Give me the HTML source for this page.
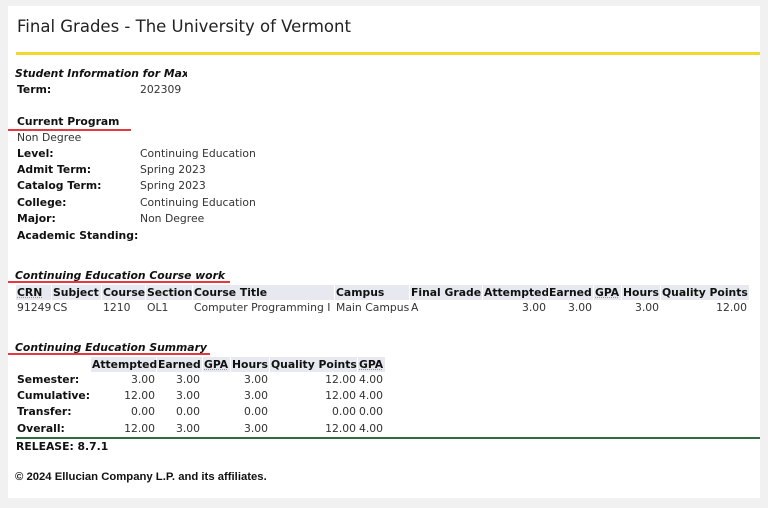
<!DOCTYPE html>
<html><head><meta charset="utf-8"><style>
body{margin:0;width:768px;height:508px;background:#f1f1f1;position:relative;overflow:hidden;font-family:"DejaVu Sans",Verdana,sans-serif;font-size:10.8px;color:#333}
#p{position:absolute;left:8px;top:6px;width:752px;height:492px;background:#fff}
.a{position:absolute;line-height:14px;white-space:nowrap}
.b{font-weight:bold;color:#111}
.i{font-style:italic;font-weight:bold;color:#111}
.h{position:absolute;background:#e8e8f0;height:15px;line-height:15px;font-weight:bold;color:#111;white-space:nowrap;padding-left:1px}
.r{position:absolute;height:2px;background:#e8383d}
.u{text-decoration:underline dotted #999}
.rt{text-align:right}
</style></head><body>
<div id="p"></div>
<div class="a" style="left:17px;top:17px;font-size:16.5px;line-height:20px;color:#222">Final Grades - The University of Vermont</div>
<div style="position:absolute;left:16px;top:52px;width:744px;height:3px;background:#f0d92c"></div>

<div class="a i" style="left:15px;top:67px;width:172px;overflow:hidden">Student Information for Max</div>
<div class="a b" style="left:17px;top:83px">Term:</div><div class="a" style="left:140px;top:83px">202309</div>
<div class="a b" style="left:17px;top:115px">Current Program</div>
<div class="r" style="left:8px;top:129px;width:123px"></div>
<div class="a" style="left:17px;top:131px">Non Degree</div>
<div class="a b" style="left:17px;top:147px">Level:</div><div class="a" style="left:140px;top:147px">Continuing Education</div>
<div class="a b" style="left:17px;top:163px">Admit Term:</div><div class="a" style="left:140px;top:163px">Spring 2023</div>
<div class="a b" style="left:17px;top:179px">Catalog Term:</div><div class="a" style="left:140px;top:179px">Spring 2023</div>
<div class="a b" style="left:17px;top:196px">College:</div><div class="a" style="left:140px;top:196px">Continuing Education</div>
<div class="a b" style="left:17px;top:212px">Major:</div><div class="a" style="left:140px;top:212px">Non Degree</div>
<div class="a b" style="left:17px;top:229px">Academic Standing:</div>

<div class="a i" style="left:15px;top:269px">Continuing Education Course work</div>
<div class="r" style="left:8px;top:281px;width:222px"></div>
<div class="h" style="left:16px;top:285px;width:34px"><span class="u">CRN</span></div>
<div class="h" style="left:52px;top:285px;width:48px">Subject</div>
<div class="h" style="left:102px;top:285px;width:42px">Course</div>
<div class="h" style="left:146px;top:285px;width:45px">Section</div>
<div class="h" style="left:193px;top:285px;width:140px">Course Title</div>
<div class="h" style="left:335px;top:285px;width:73px">Campus</div>
<div class="h" style="left:410px;top:285px;width:71px">Final Grade</div>
<div class="h" style="left:483px;top:285px;width:63px">Attempted</div>
<div class="h" style="left:548px;top:285px;width:44px">Earned</div>
<div class="h" style="left:594px;top:285px;width:26px"><span class="u">GPA</span></div>
<div class="h" style="left:622px;top:285px;width:37px">Hours</div>
<div class="h" style="left:661px;top:285px;width:87px">Quality Points</div>
<div class="a" style="left:17px;top:301px">91249</div>
<div class="a" style="left:53px;top:301px">CS</div>
<div class="a" style="left:103px;top:301px">1210</div>
<div class="a" style="left:147px;top:301px">OL1</div>
<div class="a" style="left:194px;top:301px">Computer Programming I</div>
<div class="a" style="left:336px;top:301px">Main Campus</div>
<div class="a" style="left:411px;top:301px">A</div>
<div class="a rt" style="left:483px;top:301px;width:63px">3.00</div>
<div class="a" style="left:568px;top:301px">3.00</div>
<div class="a rt" style="left:622px;top:301px;width:37px">3.00</div>
<div class="a rt" style="left:661px;top:301px;width:86px">12.00</div>

<div class="a i" style="left:15px;top:341px">Continuing Education Summary</div>
<div class="r" style="left:8px;top:353px;width:202px"></div>
<div class="h" style="left:91px;top:357px;width:64px">Attempted</div>
<div class="h" style="left:157px;top:357px;width:44px">Earned</div>
<div class="h" style="left:203px;top:357px;width:26px"><span class="u">GPA</span></div>
<div class="h" style="left:231px;top:357px;width:37px">Hours</div>
<div class="h" style="left:270px;top:357px;width:86px">Quality Points</div>
<div class="h" style="left:358px;top:357px;width:26px"><span class="u">GPA</span></div>

<div class="a b" style="left:17px;top:373px">Semester:</div>
<div class="a rt" style="left:91px;top:373px;width:64px">3.00</div><div class="a" style="left:176px;top:373px">3.00</div><div class="a rt" style="left:231px;top:373px;width:37px">3.00</div><div class="a rt" style="left:270px;top:373px;width:86px">12.00</div><div class="a" style="left:359px;top:373px">4.00</div>

<div class="a b" style="left:17px;top:389px">Cumulative:</div>
<div class="a rt" style="left:91px;top:389px;width:64px">12.00</div><div class="a" style="left:176px;top:389px">3.00</div><div class="a rt" style="left:231px;top:389px;width:37px">3.00</div><div class="a rt" style="left:270px;top:389px;width:86px">12.00</div><div class="a" style="left:359px;top:389px">4.00</div>

<div class="a b" style="left:17px;top:405px">Transfer:</div>
<div class="a rt" style="left:91px;top:405px;width:64px">0.00</div><div class="a" style="left:176px;top:405px">0.00</div><div class="a rt" style="left:231px;top:405px;width:37px">0.00</div><div class="a rt" style="left:270px;top:405px;width:86px">0.00</div><div class="a" style="left:359px;top:405px">0.00</div>

<div class="a b" style="left:17px;top:422px">Overall:</div>
<div class="a rt" style="left:91px;top:422px;width:64px">12.00</div><div class="a" style="left:176px;top:422px">3.00</div><div class="a rt" style="left:231px;top:422px;width:37px">3.00</div><div class="a rt" style="left:270px;top:422px;width:86px">12.00</div><div class="a" style="left:359px;top:422px">4.00</div>

<div style="position:absolute;left:16px;top:437px;width:744px;height:2px;background:#2e6b3e"></div>
<div class="a b" style="left:16px;top:440px">RELEASE: 8.7.1</div>
<div class="a b" style="left:15px;top:470px;font-family:'Liberation Sans',sans-serif;font-size:11.3px">© 2024 Ellucian Company L.P. and its affiliates.</div>
</body></html>
